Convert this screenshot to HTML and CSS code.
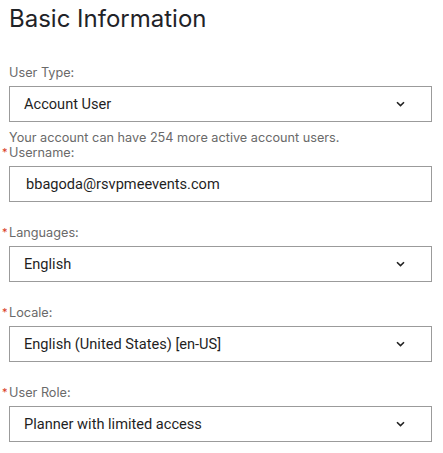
FILE: index.html
```html
<!DOCTYPE html>
<html lang="en">
<head>
<meta charset="utf-8">
<title>Basic Information</title>
<link rel="stylesheet" href="styles.css">
</head>
<body>
<main class="form">
  <h1 class="title">Basic Information</h1>

  <div class="field first">
    <div class="label">User Type:</div>
    <div class="select"><span class="value">Account User</span><svg class="chev" width="9" height="6" viewBox="0 0 9 6"><path d="M1 1.2 L4.5 4.6 L8 1.2" fill="none" stroke="#222" stroke-width="1.6"/></svg></div>
    <div class="help">Your account can have 254 more active account users.</div>
  </div>

  <div class="field">
    <div class="label req"><span class="star">*</span>Username:</div>
    <div class="input"><span class="value">bbagoda@rsvpmeevents.com</span></div>
  </div>

  <div class="field">
    <div class="label req"><span class="star">*</span>Languages:</div>
    <div class="select"><span class="value">English</span><svg class="chev" width="9" height="6" viewBox="0 0 9 6"><path d="M1 1.2 L4.5 4.6 L8 1.2" fill="none" stroke="#222" stroke-width="1.6"/></svg></div>
  </div>

  <div class="field">
    <div class="label req"><span class="star">*</span>Locale:</div>
    <div class="select"><span class="value">English (United States) [en-US]</span><svg class="chev" width="9" height="6" viewBox="0 0 9 6"><path d="M1 1.2 L4.5 4.6 L8 1.2" fill="none" stroke="#222" stroke-width="1.6"/></svg></div>
  </div>

  <div class="field">
    <div class="label req"><span class="star">*</span>User Role:</div>
    <div class="select"><span class="value">Planner with limited access</span><svg class="chev" width="9" height="6" viewBox="0 0 9 6"><path d="M1 1.2 L4.5 4.6 L8 1.2" fill="none" stroke="#222" stroke-width="1.6"/></svg></div>
  </div>
</main>
</body>
</html>
```

FILE: styles.css
```css
html, body {
  margin: 0;
  padding: 0;
  background: #ffffff;
}
body {
  font-family: "Inter", "Roboto", sans-serif;
  color: #1f1f1f;
}
.form {
  padding: 4px 11px 0 9px;
}
.title {
  margin: 0 0 31px 0;
  font-size: 24px;
  font-weight: 400;
  line-height: 30px;
  color: #1f2328;
}
.field {
  margin-bottom: 23px;
}
.field.first {
  margin-bottom: 0;
}
.label {
  position: relative;
  font-size: 12.7px;
  line-height: 16px;
  color: #6a6a6a;
  margin-bottom: 5px;
}
.star {
  position: absolute;
  left: -7px;
  top: -1px;
  color: #d9381e;
  font-size: 11px;
}
.select, .input {
  box-sizing: border-box;
  height: 36px;
  border: 1px solid #9b9b9b;
  display: flex;
  align-items: center;
  justify-content: space-between;
  padding: 0 26px 0 14px;
  font-family: "Roboto", "Inter", sans-serif;
  font-size: 14.6px;
  color: #1f1f1f;
}
.input {
  padding-left: 16px;
}
.chev {
  display: block;
}
.help {
  margin-top: 8px;
  font-size: 12.7px;
  line-height: 16px;
  color: #6a6a6a;
}
.field.first + .field .label {
  margin-top: -1px;
}
```
